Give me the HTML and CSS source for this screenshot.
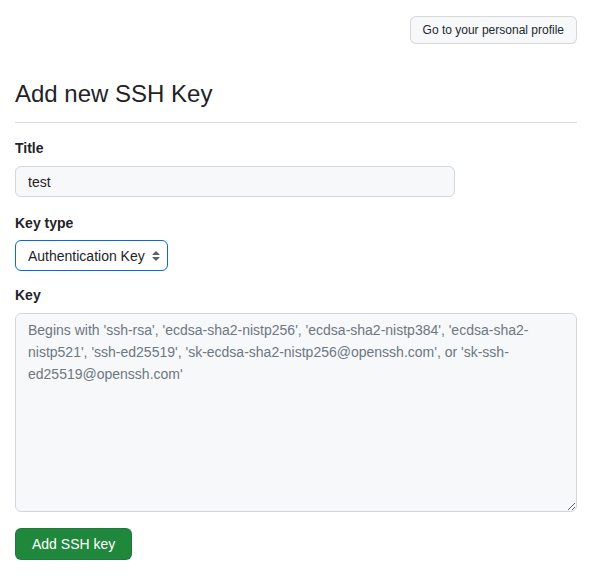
FILE: index.html
```html
<!DOCTYPE html>
<html>
<head>
<meta charset="utf-8">
<link rel="stylesheet" href="styles.css">
</head>
<body>
<div class="page">
  <div class="topbar">
    <a class="btn" href="#">Go to your personal profile</a>
  </div>
  <h1 class="title">Add new SSH Key</h1>
  <form class="form">
    <div class="group">
      <label class="label">Title</label>
      <input class="input" type="text" value="test">
    </div>
    <div class="group group-tight">
      <label class="label">Key type</label>
      <select class="select">
        <option>Authentication Key</option>
        <option>Signing Key</option>
      </select>
    </div>
    <div class="group">
      <label class="label">Key</label>
      <textarea class="textarea" placeholder="Begins with 'ssh-rsa', 'ecdsa-sha2-nistp256', 'ecdsa-sha2-nistp384', 'ecdsa-sha2-nistp521', 'ssh-ed25519', 'sk-ecdsa-sha2-nistp256@openssh.com', or 'sk-ssh-ed25519@openssh.com'"></textarea>
    </div>
    <button class="btn-primary" type="button">Add SSH key</button>
  </form>
</div>
</body>
</html>
```
FILE: styles.css
```css
* { box-sizing: border-box; }
body {
  margin: 0;
  font-family: "Liberation Sans", Arial, sans-serif;
  font-size: 14px;
  color: #1f2328;
  background: #fff;
}
.page {
  padding: 16px 15px 0 15px;
}
.topbar {
  display: flex;
  justify-content: flex-end;
}
.btn {
  display: inline-flex;
  align-items: center;
  height: 28px;
  padding: 0 12px;
  font-size: 12px;
  color: #24292f;
  text-decoration: none;
  background: #f6f8fa;
  border: 1px solid rgba(31,35,40,0.15);
  border-radius: 6px;
}
.title {
  margin: 32px 0 0 0;
  font-size: 24px;
  font-weight: 400;
  line-height: 36px;
  padding-bottom: 10px;
  border-bottom: 1px solid #d8dee4;
}
.form {
  padding-top: 15px;
}
.group {
  margin-bottom: 16px;
}
.group-tight {
  margin-bottom: 14px;
}
.label {
  display: block;
  font-weight: 600;
  font-size: 14px;
  line-height: 20px;
  margin-bottom: 8px;
}
.input {
  display: block;
  width: 440px;
  height: 31px;
  padding: 5px 12px;
  font: inherit;
  font-size: 14px;
  color: #1f2328;
  background: #f6f8fa;
  border: 1px solid #d0d7de;
  border-radius: 6px;
  outline: none;
}
.select {
  display: block;
  height: 31px;
  margin-top: -1px;
  padding: 5px 22px 5px 12px;
  font: inherit;
  font-size: 14px;
  color: #1f2328;
  background-color: #fff;
  background-image: url("data:image/svg+xml;utf8,<svg xmlns='http://www.w3.org/2000/svg' width='16' height='16' viewBox='0 0 16 16'><path fill='%23586069' d='M4.427 9.427l3.396 3.396a.25.25 0 00.354 0l3.396-3.396A.25.25 0 0011.396 9H4.604a.25.25 0 00-.177.427zM4.427 6.573l3.396-3.396a.25.25 0 01.354 0l3.396 3.396A.25.25 0 0111.396 7H4.604a.25.25 0 01-.177-.427z'/></svg>");
  background-repeat: no-repeat;
  background-position: right 3px center;
  background-size: 16px 16px;
  border: 1px solid #0969da;
  border-radius: 6px;
  appearance: none;
  -webkit-appearance: none;
  outline: none;
}
.textarea {
  display: block;
  width: 100%;
  height: 199px;
  padding: 5px 12px;
  font: inherit;
  font-size: 14px;
  line-height: 22px;
  color: #1f2328;
  background: #f6f8fa;
  border: 1px solid #d0d7de;
  border-radius: 6px;
  outline: none;
}
.textarea::placeholder {
  color: #6e7781;
}
.btn-primary {
  display: inline-flex;
  align-items: center;
  height: 32px;
  padding: 0 16px;
  font: inherit;
  font-size: 14px;
  color: #fff;
  background: #1f883d;
  border: 1px solid rgba(31,35,40,0.15);
  border-radius: 6px;
}
```
